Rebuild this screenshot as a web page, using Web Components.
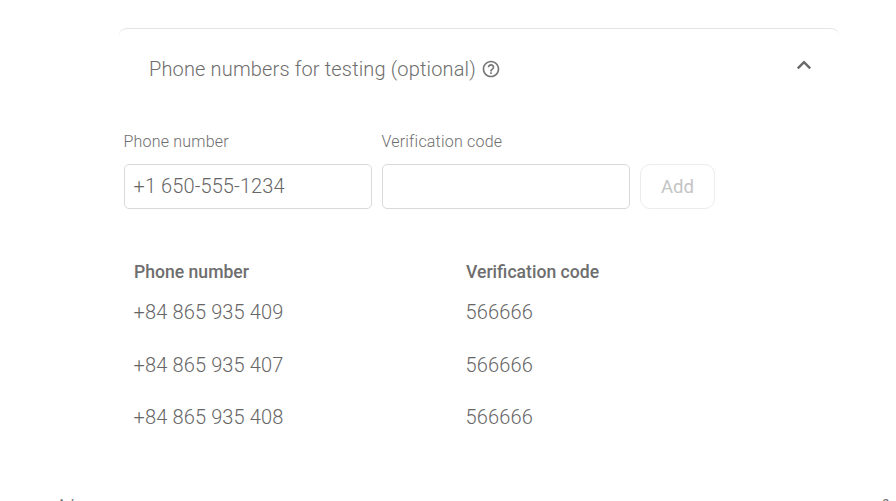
<!DOCTYPE html>
<html>
<head>
<meta charset="utf-8">
<title>Phone numbers for testing</title>
<style>
html,body{margin:0;height:501px;overflow:hidden;background:#fff;font-family:Roboto,"Liberation Sans",sans-serif;}
</style>
</head>
<body>
<test-numbers-card>
  <phone-row slot="rows" phone="+84 865 935 409" code="566666"></phone-row>
  <phone-row slot="rows" phone="+84 865 935 407" code="566666"></phone-row>
  <phone-row slot="rows" phone="+84 865 935 408" code="566666"></phone-row>
</test-numbers-card>
<page-peek></page-peek>
<script>
const cardTemplate = document.createElement('template');
cardTemplate.innerHTML = `
<style>
:host{display:block;box-sizing:border-box;width:720px;height:467px;margin:28px 0 0 119px;border-top:1px solid #e4e4e4;border-radius:8px;color:#757575;}
.head{display:flex;align-items:center;height:80px;padding:0 26px 0 30px;}
.title{font-size:20px;line-height:24px;font-weight:300;color:#6e6e6e;letter-spacing:.15px;}
.help{margin-left:5px;width:20px;height:20px;display:block;}
.chev{margin-left:auto;margin-top:-9px;width:18px;height:18px;display:block;}
.form{display:flex;align-items:flex-end;gap:10px;margin-top:24px;padding-left:5px;}
.rows{padding:0 0 0 15px;margin-top:53px;}
.th{display:grid;grid-template-columns:332px 1fr;font-size:17.6px;line-height:20px;font-weight:500;color:#6e6e6e;margin-bottom:19px;}
::slotted(phone-row){margin-bottom:30.5px;}
</style>
<div class="head">
  <span class="title">Phone numbers for testing (optional)</span>
  <svg class="help" viewBox="0 0 24 24" fill="#777"><path d="M11 18h2v-2h-2v2zm1-16C6.48 2 2 6.48 2 12s4.48 10 10 10 10-4.48 10-10S17.52 2 12 2zm0 18c-4.41 0-8-3.59-8-8s3.59-8 8-8 8 3.59 8 8-3.59 8-8 8zm0-14c-2.21 0-4 1.79-4 4h2c0-1.1.9-2 2-2s2 .9 2 2c0 2-3 1.75-3 5h2c0-2.25 3-2.5 3-5 0-2.21-1.79-4-4-4z"/></svg>
  <svg class="chev" viewBox="0 0 18 18" fill="none" stroke="#6b6b6b" stroke-width="2.5"><path d="M2.8 12.3 9 6.2l6.2 6.1"/></svg>
</div>
<div class="form">
  <labeled-field label="Phone number" placeholder="+1 650-555-1234"></labeled-field>
  <labeled-field label="Verification code"></labeled-field>
  <add-button>Add</add-button>
</div>
<div class="rows">
  <div class="th"><span>Phone number</span><span>Verification code</span></div>
  <slot name="rows"></slot>
</div>`;
class TestNumbersCard extends HTMLElement {
  constructor(){
    super();
    this.attachShadow({mode:'open'});
    this.shadowRoot.appendChild(cardTemplate.content.cloneNode(true));
  }
}

const fieldTemplate = document.createElement('template');
fieldTemplate.innerHTML = `
<style>
:host{display:block;width:248px;}
label{display:block;font-size:16px;line-height:18px;font-weight:300;color:#6e6e6e;margin-bottom:13px;margin-left:-.5px;letter-spacing:.2px;}
.box{box-sizing:border-box;height:45px;border:1px solid #d9d9d9;border-radius:5px;display:flex;align-items:center;padding:0 8.5px 2px;font-size:20px;font-weight:300;color:#666;letter-spacing:.1px;}
</style>
<label></label>
<div class="box"></div>`;
class LabeledField extends HTMLElement {
  constructor(){
    super();
    this.attachShadow({mode:'open'});
    this.shadowRoot.appendChild(fieldTemplate.content.cloneNode(true));
  }
  connectedCallback(){
    this.shadowRoot.querySelector('label').textContent = this.getAttribute('label');
    this.shadowRoot.querySelector('.box').textContent = this.getAttribute('placeholder') || '';
  }
}

const addTemplate = document.createElement('template');
addTemplate.innerHTML = `
<style>
:host{box-sizing:border-box;display:flex;align-items:center;justify-content:center;width:75px;height:45px;border:1px solid #ececec;border-radius:10px;font-size:18.6px;color:#c4c4c4;}
</style>
<slot></slot>`;
class AddButton extends HTMLElement {
  constructor(){
    super();
    this.attachShadow({mode:'open'});
    this.shadowRoot.appendChild(addTemplate.content.cloneNode(true));
  }
}

const rowTemplate = document.createElement('template');
rowTemplate.innerHTML = `
<style>
:host{display:grid;grid-template-columns:332px 1fr;font-size:20px;line-height:22px;font-weight:300;color:#666;letter-spacing:.14px;margin-left:-.5px;}
</style>
<span id="phone"></span><span id="code"></span>`;
class PhoneRow extends HTMLElement {
  constructor(){
    super();
    this.attachShadow({mode:'open'});
    this.shadowRoot.appendChild(rowTemplate.content.cloneNode(true));
  }
  connectedCallback(){
    this.shadowRoot.querySelector('#phone').textContent = this.getAttribute('phone');
    this.shadowRoot.querySelector('#code').textContent = this.getAttribute('code');
  }
}

// top of the next section, cut off by the window edge
const peekTemplate = document.createElement('template');
peekTemplate.innerHTML = `
<style>
:host{display:flex;justify-content:space-between;padding:0 7px 0 57px;font-size:14px;line-height:20px;color:#757575;}
</style>
<span>Ad</span><span>?</span>`;
class PagePeek extends HTMLElement {
  constructor(){
    super();
    this.attachShadow({mode:'open'});
    this.shadowRoot.appendChild(peekTemplate.content.cloneNode(true));
  }
}

customElements.define('test-numbers-card', TestNumbersCard);
customElements.define('labeled-field', LabeledField);
customElements.define('add-button', AddButton);
customElements.define('phone-row', PhoneRow);
customElements.define('page-peek', PagePeek);
</script>
</body>
</html>
